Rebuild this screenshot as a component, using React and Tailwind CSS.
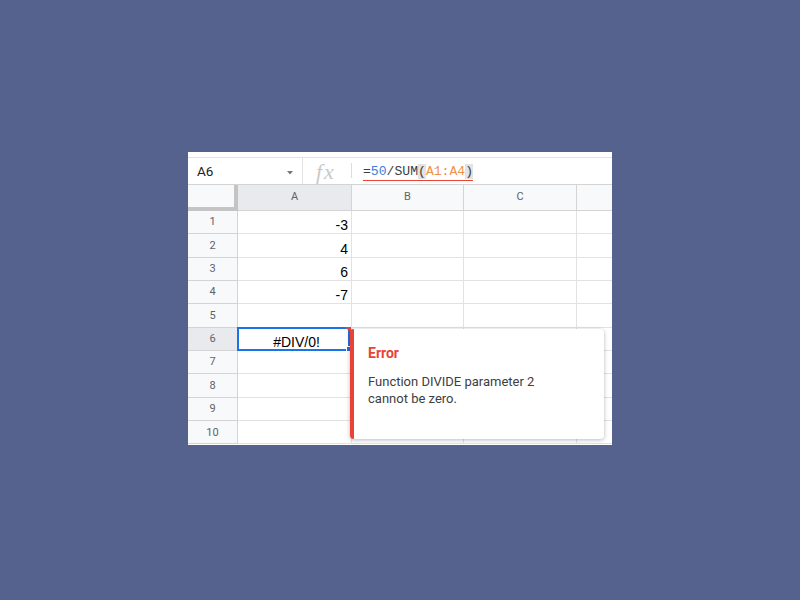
import React from "react";

const rows = [
  { n: 1, a: "-3" },
  { n: 2, a: "4" },
  { n: 3, a: "6" },
  { n: 4, a: "-7" },
  { n: 5, a: "" },
  { n: 6, a: "#DIV/0!", sel: true },
  { n: 7, a: "" },
  { n: 8, a: "" },
  { n: 9, a: "" },
  { n: 10, a: "" },
];

export default function App() {
  return (
    <div className="w-[800px] h-[600px] bg-[#56628e] pl-[188px] pt-[152px]">
      <div className="relative w-[424px] h-[293px] bg-white overflow-hidden font-['Roboto',sans-serif]">
        {/* top strip */}
        <div className="h-[6px] border-b border-[#e3e3e3]" />
        {/* formula bar */}
        <div className="flex h-[26px] items-stretch">
          <div className="w-[115px] flex items-center justify-between pl-[9px] pr-[9px] border-r border-[#e3e3e3]">
            <span className="text-[13.5px] text-[#202124] mt-[1px]">A6</span>
            <svg width="6" height="4" viewBox="0 0 6 4" className="mt-[3px]">
              <path d="M0 0 L6 0 L3 3.5 Z" fill="#777" />
            </svg>
          </div>
          <div className="w-[48px] flex items-center">
            <span className="ml-[13px] mt-[1px] text-[22px] italic text-[#c9c9c9] leading-none font-['Liberation_Serif',serif] tracking-[2px]">
              fx
            </span>
          </div>
          <div className="flex items-center">
            <div className="w-px h-[15px] bg-[#dadce0] mb-[2px]" />
          </div>
          <div className="flex items-center pl-[11px]">
            <span className="relative inline-block mt-[2px] font-['Liberation_Mono',monospace] text-[13.1px] leading-[16px] text-[#3c4043]">
              =<span className="text-[#3b7ddd]">50</span>/SUM
              <span className="bg-[#e3e3e3]">(</span>
              <span className="text-[#f0904a]">A1:A4</span>
              <span className="bg-[#e3e3e3]">)</span>
              <span className="absolute left-0 right-0 bottom-[-1px] h-px bg-[#ea4335]" />
            </span>
          </div>
        </div>
        {/* header row */}
        <div className="flex h-[27px] border-t border-[#d4d4d4]">
          <div className="w-[50px] shrink-0 bg-[#f8f9fa] border-r-4 border-b-4 border-[#c4c4c4]" />
          <div className="w-[114px] shrink-0 bg-[#e8eaed] border-r border-b border-[#d4d4d4] flex items-center justify-center text-[11px] text-[#5f6368]">
            A
          </div>
          <div className="w-[112px] shrink-0 bg-[#f8f9fa] border-r border-b border-[#d4d4d4] flex items-center justify-center text-[11px] text-[#5f6368]">
            B
          </div>
          <div className="w-[113px] shrink-0 bg-[#f8f9fa] border-r border-b border-[#d4d4d4] flex items-center justify-center text-[11px] text-[#5f6368]">
            C
          </div>
          <div className="flex-1 bg-[#f8f9fa] border-b border-[#d4d4d4]" />
        </div>
        {/* rows */}
        {rows.map((r) => (
          <div key={r.n} className="flex h-[23.35px]">
            <div
              className={
                "w-[50px] shrink-0 border-r border-b border-[#d4d4d4] flex items-center justify-center pt-[1px] text-[11px] text-[#5f6368] " +
                (r.sel ? "bg-[#e8eaed]" : "bg-[#f8f9fa]")
              }
            >
              {r.n}
            </div>
            <div
              className={
                "relative w-[114px] shrink-0 border-r border-b border-[#e2e2e2] flex items-end leading-[16px] font-['Liberation_Sans',Arial,sans-serif] text-[14px] text-[#000] " +
                (r.sel ? "justify-center pl-[4px]" : "justify-end pr-[3px]")
              }
            >
              {r.a}
              {r.sel && (
                <>
                  <div className="absolute left-[-1px] top-[-1px] w-[113px] h-[24.4px] border-2 border-[#1a73e8]" />
                  <svg className="absolute right-[0px] top-[-1px]" width="6" height="6" viewBox="0 0 6 6">
                    <path d="M0 0 L6 0 L6 6 Z" fill="#ea4335" />
                  </svg>
                  <div className="absolute right-[-1px] bottom-[-2px] w-[6px] h-[6px] bg-[#1a73e8] border border-white" />
                </>
              )}
            </div>
            <div className="w-[112px] shrink-0 border-r border-b border-[#e2e2e2]" />
            <div className="w-[113px] shrink-0 border-r border-b border-[#e2e2e2]" />
            <div className="flex-1 border-b border-[#e2e2e2]" />
          </div>
        ))}
        {/* error tooltip */}
        <div className="absolute left-[162px] top-[177px] w-[254px] h-[110px] bg-white rounded-[4px] border-l-4 border-[#ea4335] shadow-[0_1px_4px_rgba(0,0,0,0.28)] pl-[14px] pt-[14px]">
          <div className="text-[14px] leading-[20px] font-bold text-[#ea4335]">Error</div>
          <div className="mt-[10px] text-[13px] leading-[17px] text-[#3c4043]">
            Function DIVIDE parameter 2
            <br />
            cannot be zero.
          </div>
        </div>
      </div>
    </div>
  );
}
